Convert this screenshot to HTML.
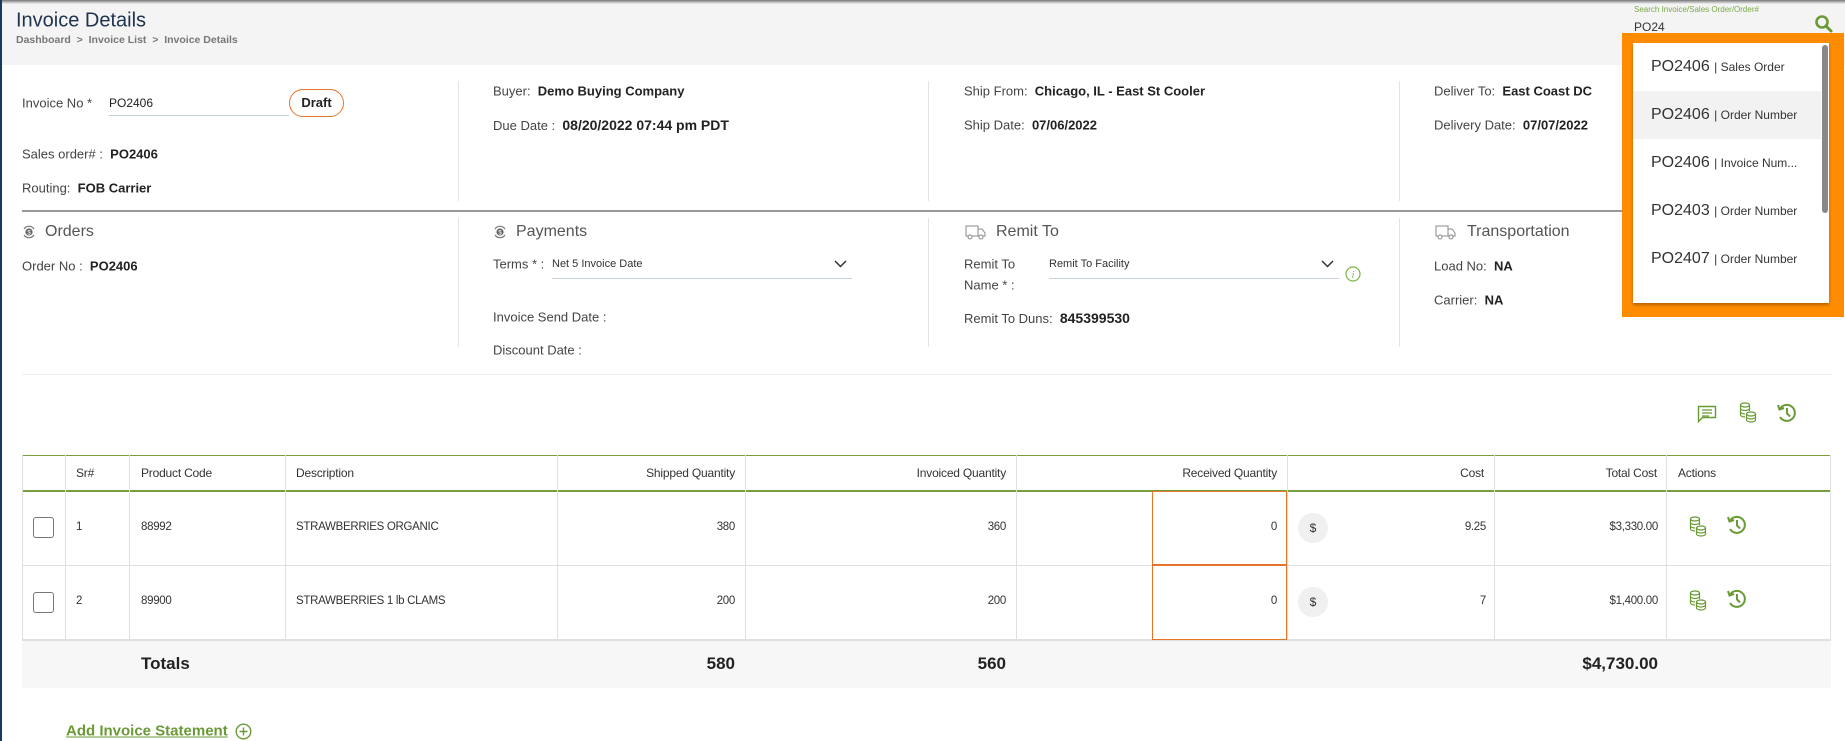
<!DOCTYPE html>
<html><head><meta charset="utf-8"><style>
*{box-sizing:border-box;margin:0;padding:0}
body{width:1845px;height:741px;overflow:hidden;background:#fff;font-family:"Liberation Sans",sans-serif;color:#333;position:relative;font-size:13px}
.a{position:absolute;white-space:nowrap}
.c{transform:translateY(-50%)}
.lbl{color:#444}
b{color:#222}
.vd{position:absolute;width:1px;background:#e4e4e4}
.h2{font-size:16px;color:#555}
.th{position:absolute;top:473px;transform:translateY(-50%);font-size:12px;color:#333;letter-spacing:-0.2px}
.td{position:absolute;transform:translateY(-50%);font-size:11.5px;color:#333;letter-spacing:-0.3px}
.col{position:absolute;top:455px;width:1px;height:185px;background:#e0e0e0}
.r{text-align:right}
.dd{position:absolute;left:1651px;font-size:16px;color:#333;transform:translateY(-50%)}
.dd span{font-size:12px}
</style></head><body>
<div class="a" style="left:0;top:0;width:1845px;height:65px;background:#f4f4f4"></div>
<div class="a" style="left:0;top:0;width:1845px;height:4px;background:linear-gradient(#777,#f4f4f4)"></div>
<div class="a" style="left:0;top:0;width:2px;height:741px;background:#163a5f"></div>
<div class="a c" style="left:16px;top:21px;font-size:20px;color:#1f3350">Invoice Details</div>
<div class="a c" style="left:16px;top:40px;font-size:10.5px;font-weight:bold;color:#777">Dashboard &nbsp;&gt;&nbsp; Invoice List &nbsp;&gt;&nbsp; Invoice Details</div>

<div class="a" style="left:1634px;top:5px;font-size:8px;color:#7aa84a">Search Invoice/Sales Order/Order#</div>
<div class="a c" style="left:1634px;top:27px;font-size:12px;color:#333">PO24</div>
<svg class="a" style="left:1814px;top:14px" width="20" height="20" viewBox="0 0 20 20"><circle cx="8" cy="8" r="5.5" fill="none" stroke="#6a9a35" stroke-width="2.6"/><line x1="12" y1="12" x2="17" y2="17" stroke="#6a9a35" stroke-width="3" stroke-linecap="round"/></svg>

<div class="a c lbl" style="left:22px;top:103px">Invoice No *</div>
<div class="a c" style="left:109px;top:103px;font-size:12px;color:#222">PO2406</div>
<div class="a" style="left:109px;top:115px;width:180px;height:1px;background:#c7d0dc"></div>
<div class="a" style="left:289px;top:89px;width:55px;height:28px;border:1.5px solid #e8742a;border-radius:14px;font-weight:bold;font-size:13px;color:#222;text-align:center;line-height:25px">Draft</div>
<div class="a c lbl" style="left:22px;top:154px">Sales order# : &nbsp;<b>PO2406</b></div>
<div class="a c lbl" style="left:22px;top:188px">Routing: &nbsp;<b>FOB Carrier</b></div>

<div class="vd" style="left:458px;top:81px;height:120px"></div>
<div class="vd" style="left:928px;top:81px;height:120px"></div>
<div class="vd" style="left:1399px;top:81px;height:120px"></div>

<div class="a c lbl" style="left:493px;top:91px">Buyer: &nbsp;<b>Demo Buying Company</b></div>
<div class="a c lbl" style="left:493px;top:125px">Due Date : &nbsp;<b style="font-size:14px">08/20/2022 07:44 pm PDT</b></div>
<div class="a c lbl" style="left:964px;top:91px">Ship From: &nbsp;<b>Chicago, IL - East St Cooler</b></div>
<div class="a c lbl" style="left:964px;top:125px">Ship Date: &nbsp;<b>07/06/2022</b></div>
<div class="a c lbl" style="left:1434px;top:91px">Deliver To: &nbsp;<b>East Coast DC</b></div>
<div class="a c lbl" style="left:1434px;top:125px">Delivery Date: &nbsp;<b>07/07/2022</b></div>

<div class="a" style="left:22px;top:210px;width:1610px;height:2px;background:#999"></div>

<svg class="a" style="left:22px;top:224px" width="14" height="16" viewBox="0 0 14 16"><path d="M2 5 A6 6 0 0 1 12 5 M12 11 A6 6 0 0 1 2 11" fill="none" stroke="#777" stroke-width="1.2"/><circle cx="7" cy="8" r="3.6" fill="#666"/><text x="7" y="10.5" font-size="6" fill="#fff" text-anchor="middle" font-family="Liberation Sans">$</text></svg>
<div class="a c h2" style="left:45px;top:232px">Orders</div>
<svg class="a" style="left:493px;top:224px" width="14" height="16" viewBox="0 0 14 16"><path d="M2 5 A6 6 0 0 1 12 5 M12 11 A6 6 0 0 1 2 11" fill="none" stroke="#777" stroke-width="1.2"/><circle cx="7" cy="8" r="3.6" fill="#666"/><text x="7" y="10.5" font-size="6" fill="#fff" text-anchor="middle" font-family="Liberation Sans">$</text></svg>
<div class="a c h2" style="left:516px;top:232px">Payments</div>
<svg class="a" style="left:965px;top:224px" width="22" height="16" viewBox="0 0 22 16"><path d="M1 2h12v10H1z M13 5h4l3 4v3h-7" fill="none" stroke="#888" stroke-width="1"/><circle cx="5" cy="13" r="2" fill="#fff" stroke="#888"/><circle cx="16" cy="13" r="2" fill="#fff" stroke="#888"/></svg>
<div class="a c h2" style="left:996px;top:232px">Remit To</div>
<svg class="a" style="left:1435px;top:224px" width="22" height="16" viewBox="0 0 22 16"><path d="M1 2h12v10H1z M13 5h4l3 4v3h-7" fill="none" stroke="#888" stroke-width="1"/><circle cx="5" cy="13" r="2" fill="#fff" stroke="#888"/><circle cx="16" cy="13" r="2" fill="#fff" stroke="#888"/></svg>
<div class="a c h2" style="left:1467px;top:232px">Transportation</div>

<div class="vd" style="left:458px;top:218px;height:129px"></div>
<div class="vd" style="left:928px;top:218px;height:129px"></div>
<div class="vd" style="left:1399px;top:218px;height:129px"></div>

<div class="a c lbl" style="left:22px;top:266px">Order No : &nbsp;<b>PO2406</b></div>
<div class="a c lbl" style="left:493px;top:264px">Terms * :</div>
<div class="a c" style="left:552px;top:264px;font-size:11px;color:#333">Net 5 Invoice Date</div>
<div class="a" style="left:552px;top:278px;width:300px;height:1px;background:#c7d0dc"></div>
<svg class="a" style="left:834px;top:260px" width="13" height="8"><path d="M1 1l5.5 5.5L12 1" fill="none" stroke="#333" stroke-width="1.5"/></svg>
<div class="a c lbl" style="left:493px;top:317px">Invoice Send Date :</div>
<div class="a c lbl" style="left:493px;top:350px">Discount Date :</div>

<div class="a c lbl" style="left:964px;top:264px">Remit To</div>
<div class="a c lbl" style="left:964px;top:285px">Name * :</div>
<div class="a c" style="left:1049px;top:264px;font-size:11px;color:#333">Remit To Facility</div>
<div class="a" style="left:1049px;top:278px;width:290px;height:1px;background:#c7d0dc"></div>
<svg class="a" style="left:1321px;top:260px" width="13" height="8"><path d="M1 1l5.5 5.5L12 1" fill="none" stroke="#333" stroke-width="1.5"/></svg>
<svg class="a" style="left:1345px;top:266px" width="16" height="16"><circle cx="8" cy="8" r="7" fill="none" stroke="#7ab648" stroke-width="1.2"/><text x="8" y="12" font-size="10" font-style="italic" fill="#7ab648" text-anchor="middle" font-family="Liberation Serif">i</text></svg>
<div class="a c lbl" style="left:964px;top:318px">Remit To Duns: &nbsp;<b style="font-size:14px">845399530</b></div>

<div class="a c lbl" style="left:1434px;top:266px">Load No: &nbsp;<b>NA</b></div>
<div class="a c lbl" style="left:1434px;top:300px">Carrier: &nbsp;<b>NA</b></div>

<div class="a" style="left:22px;top:374px;width:1810px;height:1px;background:#f0f0f0"></div>

<svg class="a" style="left:1697px;top:405px" width="20" height="18" viewBox="0 0 20 18"><path d="M1.5 1.5h17v11h-13l-4 4z" fill="none" stroke="#6a9a35" stroke-width="1.4"/><path d="M5 5h10M5 8h10M5 11h7" stroke="#6a9a35" stroke-width="1.2"/></svg>
<svg class="a" style="left:1739px;top:402px" width="18" height="22" viewBox="0 0 18 22"><ellipse cx="6" cy="3" rx="4.5" ry="2" fill="none" stroke="#6a9a35" stroke-width="1.2"/><path d="M1.5 3v10c0 1 2 2 4.5 2M10.5 3v6" fill="none" stroke="#6a9a35" stroke-width="1.2"/><path d="M1.5 6.5c0 1 2 2 4.5 2s4.5-1 4.5-2M1.5 10c0 1 2 2 4.5 2" fill="none" stroke="#6a9a35" stroke-width="1.2"/><ellipse cx="12" cy="12" rx="4.5" ry="2" fill="none" stroke="#6a9a35" stroke-width="1.2"/><path d="M7.5 12v6c0 1 2 2 4.5 2s4.5-1 4.5-2v-6M7.5 15c0 1 2 2 4.5 2s4.5-1 4.5-2" fill="none" stroke="#6a9a35" stroke-width="1.2"/></svg>
<svg class="a" style="left:1776px;top:402px" width="22" height="22" viewBox="0 0 22 22"><path d="M4.5 6A8 8 0 1 1 4 15" fill="none" stroke="#6a9a35" stroke-width="2"/><path d="M2 3l1.5 4.5L8 6" fill="none" stroke="#6a9a35" stroke-width="2"/><path d="M11 6v5.5l3 3" fill="none" stroke="#6a9a35" stroke-width="2"/></svg>

<div class="a" style="left:22px;top:455px;width:1809px;height:1px;background:#7a9e3e"></div>
<div class="a" style="left:22px;top:490px;width:1809px;height:2px;background:#7a9e3e"></div>
<div class="a" style="left:22px;top:565px;width:1809px;height:1px;background:#e0e0e0"></div>
<div class="a" style="left:22px;top:639px;width:1809px;height:2px;background:#e0e0e0"></div>
<div class="col" style="left:22px"></div>
<div class="col" style="left:65px"></div>
<div class="col" style="left:129px"></div>
<div class="col" style="left:285px"></div>
<div class="col" style="left:557px"></div>
<div class="col" style="left:745px"></div>
<div class="col" style="left:1016px"></div>
<div class="col" style="left:1287px"></div>
<div class="col" style="left:1494px"></div>
<div class="col" style="left:1666px"></div>
<div class="col" style="left:1830px"></div>

<div class="th" style="left:76px">Sr#</div>
<div class="th" style="left:141px">Product Code</div>
<div class="th" style="left:296px">Description</div>
<div class="th r" style="right:1110px">Shipped Quantity</div>
<div class="th r" style="right:839px">Invoiced Quantity</div>
<div class="th r" style="right:568px">Received Quantity</div>
<div class="th r" style="right:361px">Cost</div>
<div class="th r" style="right:188px">Total Cost</div>
<div class="th" style="left:1678px">Actions</div>

<div class="a" style="left:1152px;top:491px;width:135px;height:149px;border:1.5px solid #e8742a"></div>
<div class="a" style="left:1152px;top:564px;width:135px;height:2px;background:#e8742a"></div>

<div class="a" style="left:33px;top:517px;width:21px;height:21px;border:1.3px solid #777;border-radius:3px"></div>
<div class="a" style="left:33px;top:592px;width:21px;height:21px;border:1.3px solid #777;border-radius:3px"></div>
<div class="td" style="left:76px;top:527px">1</div>
<div class="td" style="left:141px;top:527px">88992</div>
<div class="td" style="left:296px;top:527px">STRAWBERRIES ORGANIC</div>
<div class="td" style="right:1110px;top:527px">380</div>
<div class="td" style="right:839px;top:527px">360</div>
<div class="td" style="right:568px;top:527px">0</div>
<div class="a" style="left:1298px;top:513px;width:30px;height:30px;border-radius:50%;background:#f0f0f0;font-size:12px;text-align:center;line-height:30px">$</div>
<div class="td" style="right:359px;top:527px">9.25</div>
<div class="td" style="right:187px;top:527px">$3,330.00</div>

<div class="td" style="left:76px;top:601px">2</div>
<div class="td" style="left:141px;top:601px">89900</div>
<div class="td" style="left:296px;top:601px">STRAWBERRIES 1 lb CLAMS</div>
<div class="td" style="right:1110px;top:601px">200</div>
<div class="td" style="right:839px;top:601px">200</div>
<div class="td" style="right:568px;top:601px">0</div>
<div class="a" style="left:1298px;top:587px;width:30px;height:30px;border-radius:50%;background:#f0f0f0;font-size:12px;text-align:center;line-height:30px">$</div>
<div class="td" style="right:359px;top:601px">7</div>
<div class="td" style="right:187px;top:601px">$1,400.00</div>

<svg class="a" style="left:1689px;top:516px" width="18" height="22" viewBox="0 0 18 22"><ellipse cx="6" cy="3" rx="4.5" ry="2" fill="none" stroke="#6a9a35" stroke-width="1.2"/><path d="M1.5 3v10c0 1 2 2 4.5 2M10.5 3v6M1.5 6.5c0 1 2 2 4.5 2s4.5-1 4.5-2M1.5 10c0 1 2 2 4.5 2" fill="none" stroke="#6a9a35" stroke-width="1.2"/><ellipse cx="12" cy="12" rx="4.5" ry="2" fill="none" stroke="#6a9a35" stroke-width="1.2"/><path d="M7.5 12v6c0 1 2 2 4.5 2s4.5-1 4.5-2v-6M7.5 15c0 1 2 2 4.5 2s4.5-1 4.5-2" fill="none" stroke="#6a9a35" stroke-width="1.2"/></svg>
<svg class="a" style="left:1726px;top:514px" width="22" height="22" viewBox="0 0 22 22"><path d="M4.5 6A8 8 0 1 1 4 15" fill="none" stroke="#6a9a35" stroke-width="2"/><path d="M2 3l1.5 4.5L8 6" fill="none" stroke="#6a9a35" stroke-width="2"/><path d="M11 6v5.5l3 3" fill="none" stroke="#6a9a35" stroke-width="2"/></svg>
<svg class="a" style="left:1689px;top:590px" width="18" height="22" viewBox="0 0 18 22"><ellipse cx="6" cy="3" rx="4.5" ry="2" fill="none" stroke="#6a9a35" stroke-width="1.2"/><path d="M1.5 3v10c0 1 2 2 4.5 2M10.5 3v6M1.5 6.5c0 1 2 2 4.5 2s4.5-1 4.5-2M1.5 10c0 1 2 2 4.5 2" fill="none" stroke="#6a9a35" stroke-width="1.2"/><ellipse cx="12" cy="12" rx="4.5" ry="2" fill="none" stroke="#6a9a35" stroke-width="1.2"/><path d="M7.5 12v6c0 1 2 2 4.5 2s4.5-1 4.5-2v-6M7.5 15c0 1 2 2 4.5 2s4.5-1 4.5-2" fill="none" stroke="#6a9a35" stroke-width="1.2"/></svg>
<svg class="a" style="left:1726px;top:588px" width="22" height="22" viewBox="0 0 22 22"><path d="M4.5 6A8 8 0 1 1 4 15" fill="none" stroke="#6a9a35" stroke-width="2"/><path d="M2 3l1.5 4.5L8 6" fill="none" stroke="#6a9a35" stroke-width="2"/><path d="M11 6v5.5l3 3" fill="none" stroke="#6a9a35" stroke-width="2"/></svg>

<div class="a" style="left:22px;top:641px;width:1809px;height:47px;background:#f7f7f7"></div>
<div class="a c" style="left:141px;top:664px;font-size:17px;font-weight:bold;color:#222">Totals</div>
<div class="a c" style="right:1110px;top:664px;font-size:17px;font-weight:bold;color:#222">580</div>
<div class="a c" style="right:839px;top:664px;font-size:17px;font-weight:bold;color:#222">560</div>
<div class="a c" style="right:187px;top:664px;font-size:17px;font-weight:bold;color:#222">$4,730.00</div>

<div class="a c" style="left:66px;top:731px;font-size:15px;font-weight:bold;color:#6a9a35;text-decoration:underline">Add Invoice Statement</div>
<svg class="a" style="left:235px;top:723px" width="17" height="17"><circle cx="8.5" cy="8.5" r="7.3" fill="none" stroke="#6a9a35" stroke-width="1.4"/><path d="M8.5 4.5v8M4.5 8.5h8" stroke="#6a9a35" stroke-width="1.4"/></svg>

<div class="a" style="left:1622px;top:33px;width:222px;height:284px;background:#ff8c00"></div>
<div class="a" style="left:1633px;top:43px;width:196px;height:260px;background:#fff;box-shadow:0 2px 3px rgba(0,0,0,.3)"></div>
<div class="a" style="left:1633px;top:91px;width:188px;height:48px;background:#f2f2f2"></div>
<div class="a" style="left:1822px;top:45px;width:6px;height:168px;background:#888;border-radius:3px"></div>
<div class="dd" style="top:67px">PO2406 <span>| Sales Order</span></div>
<div class="dd" style="top:115px">PO2406 <span>| Order Number</span></div>
<div class="dd" style="top:163px">PO2406 <span>| Invoice Num...</span></div>
<div class="dd" style="top:211px">PO2403 <span>| Order Number</span></div>
<div class="dd" style="top:259px">PO2407 <span>| Order Number</span></div>
</body></html>
